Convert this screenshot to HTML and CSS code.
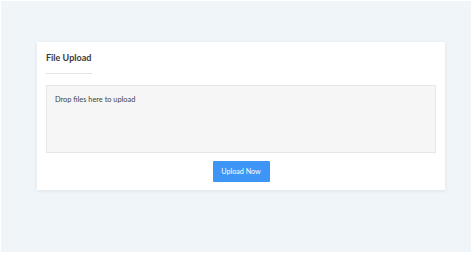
FILE: index.html
```html
<!DOCTYPE html>
<html>
<head>
<meta charset="utf-8">
<link rel="stylesheet" href="styles.css">
</head>
<body>
<div class="page">
  <div class="card">
    <h2 class="title">File Upload</h2>
    <div class="rule"></div>
    <div class="dropzone">Drop files here to upload</div>
    <div class="actions">
      <button class="btn">Upload Now</button>
    </div>
  </div>
</div>
</body>
</html>
```
FILE: styles.css
```css
html, body {
  margin: 0;
  padding: 0;
  background: #ffffff;
}
body {
  font-family: "Lato", "Open Sans", sans-serif;
  color: #333;
}
.page {
  width: 470px;
  height: 251px;
  margin: 1px 0 0 1px;
  background: #f0f5fa;
  padding: 41px 0 0 36px;
  box-sizing: border-box;
}
.card {
  width: 408px;
  height: 148px;
  background: #fff;
  box-shadow: 0 1px 4px rgba(0,0,0,0.08);
  padding: 10px 9px 0 9px;
  box-sizing: border-box;
  display: flex;
  flex-direction: column;
}
.title {
  margin: 0;
  font-size: 9px;
  font-weight: 700;
  line-height: 12px;
  color: #3a3a3a;
}
.rule {
  width: 46px;
  height: 1px;
  background: #e3e3e3;
  margin-top: 9px;
}
.dropzone {
  margin-top: 11px;
  height: 68px;
  background: #f6f6f6;
  border: 1px solid #e6e6e6;
  box-sizing: border-box;
  font-size: 7.4px;
  color: #444;
  padding: 9px 8px;
}
.actions {
  display: flex;
  justify-content: center;
  margin-top: 8px;
}
.btn {
  width: 57px;
  height: 21px;
  background: #3d96f5;
  border: none;
  border-radius: 1px;
  color: #fff;
  font-family: "Lato", sans-serif;
  font-size: 7.2px;
  padding: 0;
}
```
